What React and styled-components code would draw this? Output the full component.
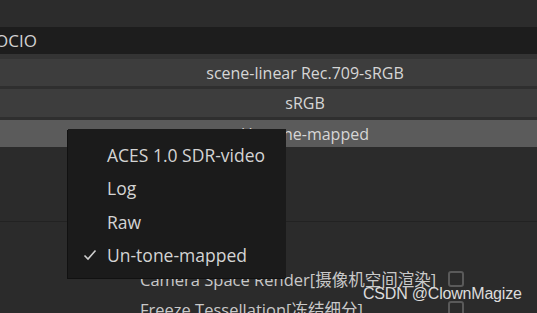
import React from 'react'
import styled, { createGlobalStyle } from 'styled-components'

const GlobalStyle = createGlobalStyle`
  html, body {
    margin: 0;
    padding: 0;
    background: #2b2b2b;
    overflow: hidden;
  }
  body {
    font-family: "Open Sans", "Noto Sans", "Noto Sans CJK SC", sans-serif;
  }
`

const Page = styled.div`
  position: relative;
  width: 537px;
  height: 313px;
  background: #2b2b2b;
  overflow: hidden;
`

const TopBar = styled.div`
  height: 27px;
  background: #2c2c2c;
`

const Header = styled.div`
  height: 27px;
  background: #1d1d1d;
  color: #d2d2d2;
  font-size: 17px;
  line-height: 27px;
  text-indent: -5px;
  white-space: nowrap;
`

const Shade = styled.div`
  height: 5px;
  background: #343434;
`

const OptionRow = styled.div`
  height: ${({ $tall }) => ($tall ? 28 : 27)}px;
  background: ${({ $active }) => ($active ? '#5b5b5b' : '#3d3d3d')};
  color: #d6d6d6;
  font-size: 16px;
  display: flex;
  align-items: center;
  justify-content: center;
  padding-left: 73px;
  white-space: nowrap;
`

const Gap = styled.div`
  height: 3px;
  background: #2f2f2f;
`

const Spacer = styled.div`
  height: 74px;
`

const Rule = styled.div`
  height: 1px;
  background: #222222;
`

const Settings = styled.div`
  padding: 42px 0 0 140px;
  display: grid;
  grid-template-columns: 308px 18px;
  grid-auto-rows: 30px;
  align-items: center;
`

const Label = styled.span`
  color: #c9c9c9;
  font-size: 16.5px;
  white-space: nowrap;
`

const Checkbox = styled.span`
  width: 12px;
  height: 12px;
  border: 2.5px solid #5a5a5a;
  border-radius: 3px;
`

const Menu = styled.div`
  position: absolute;
  left: 68px;
  top: 129px;
  width: 218px;
  padding: 9px 0 6px;
  background: #1b1b1b;
  box-shadow: -1px 1px 0 #111111;
  display: flex;
  flex-direction: column;
`

const MenuItem = styled.div`
  height: 33.5px;
  display: flex;
  align-items: center;
  color: #d4d4d4;
  font-size: 17.5px;
  white-space: nowrap;
`

const CheckSlot = styled.span`
  width: 39px;
  display: flex;
  justify-content: flex-end;
  padding-right: 10px;
  box-sizing: border-box;
`

const Watermark = styled.div`
  position: absolute;
  left: 363px;
  top: 285px;
  color: #dcdcdc;
  font-family: "Liberation Sans", Arial, sans-serif;
  font-size: 16px;
  letter-spacing: -0.2px;
  white-space: nowrap;
`

const Tick = () => (
  <svg width="14" height="12" viewBox="0 0 14 12">
    <polyline points="1.5,6.5 5,10 12.5,1.5" fill="none" stroke="#cfcfcf" strokeWidth="1.6" />
  </svg>
)

const items = ['ACES 1.0 SDR-video', 'Log', 'Raw', 'Un-tone-mapped']
const selected = 'Un-tone-mapped'

export default function App() {
  return (
    <>
      <GlobalStyle />
      <Page>
        <TopBar />
        <Header>OCIO</Header>
        <Shade />
        <OptionRow>scene-linear Rec.709-sRGB</OptionRow>
        <Gap />
        <OptionRow $tall>sRGB</OptionRow>
        <Gap />
        <OptionRow $active>Un-tone-mapped</OptionRow>
        <Spacer />
        <Rule />
        <Settings>
          <Label>Camera Space Render[摄像机空间渲染]</Label>
          <Checkbox />
          <Label>Freeze Tessellation[冻结细分]</Label>
          <Checkbox />
        </Settings>
        <Menu>
          {items.map((it) => (
            <MenuItem key={it}>
              <CheckSlot>{it === selected && <Tick />}</CheckSlot>
              {it}
            </MenuItem>
          ))}
        </Menu>
        <Watermark>CSDN @ClownMagize</Watermark>
      </Page>
    </>
  )
}
